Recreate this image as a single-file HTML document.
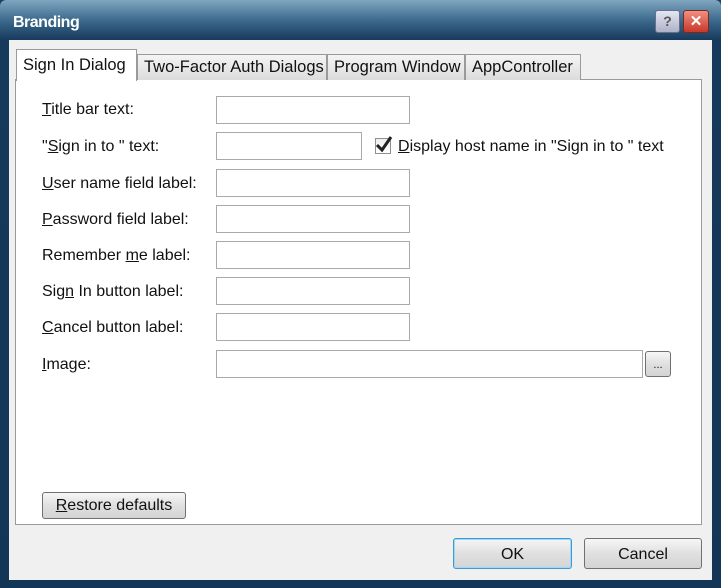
<!DOCTYPE html><html><head><style>
*{box-sizing:border-box;margin:0;padding:0}
body{width:721px;height:588px;overflow:hidden;font-family:"Liberation Sans",sans-serif;font-size:16px;color:#111;background:#1b3f60}
.frame{position:absolute;left:0;top:0;width:721px;height:588px;background:linear-gradient(#7fa6c0 0,#3d6a8e 20px,#163a5c 40px,#143656 100%);border-radius:6px 6px 0 0}
.title{position:absolute;left:13px;top:14px;color:#fff;font-weight:bold;font-size:16px;letter-spacing:-0.5px}
.client{position:absolute;left:9px;top:40px;width:703px;height:540px;background:#f0f0f0}
.a{position:absolute}
.panel{left:15px;top:79px;width:687px;height:446px;background:#fff;border:1px solid #9a9a9a}
.tab{top:54px;height:26px;border:1px solid #9a9a9a;border-bottom:none;background:linear-gradient(#f4f4f4,#dcdcdc);font-size:16.5px;padding:3px 0 0 6px;white-space:nowrap;overflow:hidden}
.sel{top:49px;height:32px;background:#fff;padding-top:6px}
.lbl{left:42px;white-space:nowrap}
.in{left:216px;width:194px;height:28px;background:#fff;border:1px solid #a9a9a9}
.btn{border:1px solid #707070;border-radius:3px;background:linear-gradient(#f6f6f6,#e0e0e0 50%,#d4d4d4);text-align:center}
u{text-decoration:underline}
</style></head><body>
<div class="frame"></div>
<div class="title">Branding</div>
<div class="a" style="left:655px;top:10px;width:25px;height:23px;border:1px solid #6b6e88;border-radius:3px;background:linear-gradient(#e4e6f2,#aeb1c8);color:#555;font-weight:bold;font-size:14px;text-align:center;line-height:21px">?</div>
<div class="a" style="left:683px;top:10px;width:26px;height:23px;border:1px solid #7a2a22;border-radius:3px;background:linear-gradient(#f09080,#c8382a);color:#fff;font-weight:bold;font-size:15px;text-align:center;line-height:21px">✕</div>
<div class="client"></div>
<div class="a panel"></div>
<div class="a tab" style="left:137px;width:190px">Two-Factor Auth Dialogs</div>
<div class="a tab" style="left:327px;width:138px">Program Window</div>
<div class="a tab" style="left:465px;width:116px">AppController</div>
<div class="a tab sel" style="left:16px;width:121px">Sign In Dialog</div>

<div class="a lbl" style="top:101px"><u>T</u>itle bar text:</div>
<div class="a in" style="top:96px"></div>
<div class="a lbl" style="top:138px">"<u>S</u>ign in to " text:</div>
<div class="a in" style="top:132px;width:146px"></div>
<div class="a" style="left:375px;top:138px;width:16px;height:16px;border:1px solid #8e8f8f;background:linear-gradient(#eee,#fff)"></div>
<svg class="a" style="left:374px;top:134px" width="20" height="20"><path d="M3 11 L8 16 L17 3" stroke="#222" stroke-width="3" fill="none"/></svg>
<div class="a" style="left:398px;top:138px;white-space:nowrap"><u>D</u>isplay host name in "Sign in to " text</div>
<div class="a lbl" style="top:175px"><u>U</u>ser name field label:</div>
<div class="a in" style="top:169px"></div>
<div class="a lbl" style="top:211px"><u>P</u>assword field label:</div>
<div class="a in" style="top:205px"></div>
<div class="a lbl" style="top:247px">Remember <u>m</u>e label:</div>
<div class="a in" style="top:241px"></div>
<div class="a lbl" style="top:283px">Sig<u>n</u> In button label:</div>
<div class="a in" style="top:277px"></div>
<div class="a lbl" style="top:319px"><u>C</u>ancel button label:</div>
<div class="a in" style="top:313px"></div>
<div class="a lbl" style="top:356px"><u>I</u>mage:</div>
<div class="a in" style="top:350px;width:427px"></div>
<div class="a btn" style="left:645px;top:351px;width:26px;height:26px;font-size:11px;line-height:26px">...</div>
<div class="a btn" style="left:42px;top:492px;width:144px;height:27px;line-height:25px"><u>R</u>estore defaults</div>
<div class="a btn" style="left:453px;top:538px;width:119px;height:31px;line-height:31px;border-color:#3c9ad6;box-shadow:inset 0 0 0 1px #9ed8f5">OK</div>
<div class="a btn" style="left:584px;top:538px;width:118px;height:31px;line-height:31px">Cancel</div>
</body></html>
